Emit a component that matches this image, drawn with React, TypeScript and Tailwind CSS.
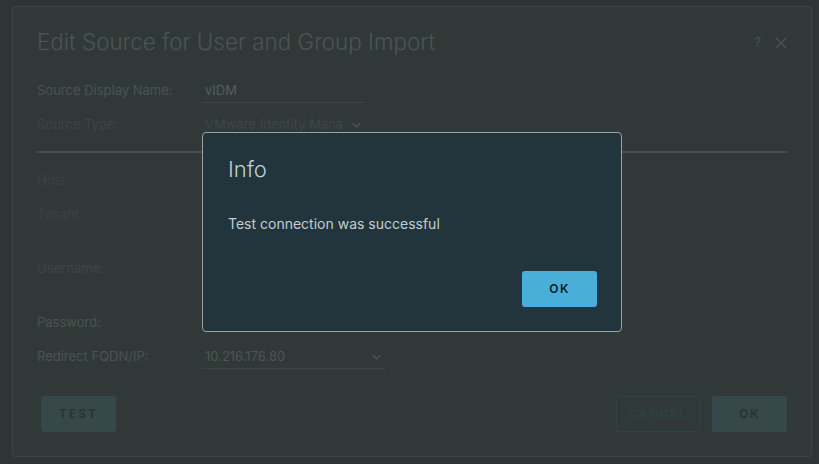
import React from 'react';

const font = "font-['Inter','Liberation_Sans',sans-serif]";

function Chevron({ className }: { className: string }) {
  return (
    <svg viewBox="0 0 10 6" className={className} fill="none" stroke="currentColor" strokeWidth="1.4">
      <path d="M1 1l4 4 4-4" />
    </svg>
  );
}

function Row({ label, labelColor, className, children }: { label: string; labelColor: string; className: string; children?: React.ReactNode }) {
  return (
    <div className={`flex items-center h-[24px] ${className}`}>
      <div className={`w-[165px] shrink-0 text-[13px] ${labelColor}`}>{label}</div>
      {children}
    </div>
  );
}

export default function App() {
  return (
    <div className={`relative w-[819px] h-[464px] overflow-hidden bg-[#2e3535] pt-[6px] pl-[12px] ${font}`}>
      <div className="w-[800px] h-[451px] rounded-[3px] border border-[#3d4645] bg-[#313938] pt-[19px] pl-[24px] pr-[24px]">
        <div className="flex items-center justify-between h-[32px]">
          <h1 className="text-[22.4px] font-light text-[#4b5453]">Edit Source for User and Group Import</h1>
          <div className="flex items-center gap-[14px] text-[#4b5453] pt-[2px]">
            <span className="text-[13px]">?</span>
            <svg viewBox="0 0 12 12" className="w-[12px] h-[12px]" fill="none" stroke="currentColor" strokeWidth="1.3">
              <path d="M1 1l10 10M11 1L1 11" />
            </svg>
          </div>
        </div>

        <Row label="Source Display Name:" labelColor="text-[#4a5352]" className="mt-[21px]">
          <div className="w-[163px] h-[24px] border-b border-[#3f4847] flex items-center pl-[3px] text-[13px] text-[#545d5c]">vIDM</div>
        </Row>
        <Row label="Source Type:" labelColor="text-[#3c4544]" className="mt-[10px]">
          <div className="w-[160px] flex items-center pl-[3px] text-[13px] text-[#3e4746]">
            <span className="w-[142px] overflow-hidden whitespace-nowrap">VMware Identity Mana</span>
            <Chevron className="w-[9px] h-[6px] ml-[5px] text-[#4d5655]" />
          </div>
        </Row>

        <div className="mt-[14px] h-[2px] bg-[#485150]" />

        <Row label="Host:" labelColor="text-[#3a4342]" className="mt-[16px]" />
        <Row label="Tenant:" labelColor="text-[#3a4342]" className="mt-[10px]" />
        <Row label="Username:" labelColor="text-[#3d4645]" className="mt-[30px]" />
        <Row label="Password:" labelColor="text-[#4a5352]" className="mt-[30px]" />
        <Row label="Redirect FQDN/IP:" labelColor="text-[#4a5352]" className="mt-[10px]">
          <div className="w-[184px] h-[24px] border-b border-[#3b4443] flex items-center justify-between pl-[3px] pr-[5px] text-[13px] text-[#4c5554]">
            <span>10.216.176.80</span>
            <Chevron className="w-[9px] h-[6px] text-[#4d5655]" />
          </div>
        </Row>

        <div className="mt-[27px] flex items-center justify-between pl-[4px]">
          <button className="w-[75px] h-[36px] rounded-[3px] bg-[#364849] text-[12px] font-semibold tracking-[2px] text-[#283233]">TEST</button>
          <div className="flex items-center gap-[12px]">
            <button className="w-[84px] h-[36px] rounded-[3px] border border-[#2f4447] text-[12px] font-semibold tracking-[1.5px] text-[#2d4245]">CANCEL</button>
            <button className="w-[75px] h-[36px] rounded-[3px] bg-[#364849] text-[12px] font-semibold tracking-[1.5px] text-[#283233]">OK</button>
          </div>
        </div>
      </div>

      <div className="absolute left-[202px] top-[132px] w-[420px] h-[200px] rounded-[4px] border border-[#9aa1a2] bg-[#22343c] pl-[25px] pr-[24px] pt-[20px] flex flex-col">
        <h2 className="text-[22px] font-light text-[#c5ced1] leading-[32px]">Info</h2>
        <p className="mt-[29px] text-[14px] text-[#c5cdd1] leading-[20px]">Test connection was successful</p>
        <div className="mt-[37px] flex justify-end">
          <button className="w-[75px] h-[36px] rounded-[3px] bg-[#49afd9] text-[12px] font-semibold tracking-[1.5px] text-[#0e1b21]">OK</button>
        </div>
      </div>
    </div>
  );
}
